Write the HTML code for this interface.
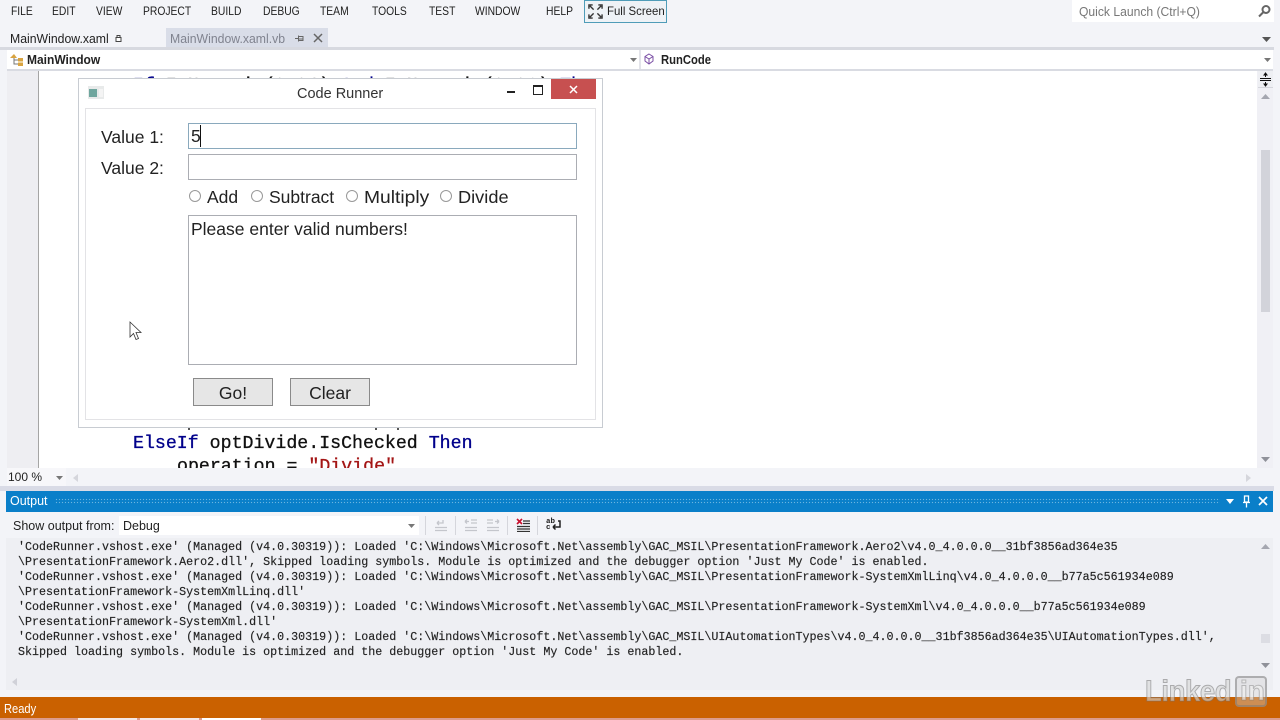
<!DOCTYPE html>
<html><head><meta charset="utf-8"><style>
html,body{margin:0;padding:0}
body{width:1280px;height:720px;overflow:hidden;position:relative;background:#f3f4f8;font-family:"Liberation Sans",sans-serif;color:#1e1e1e}
.a{position:absolute;white-space:pre;transform-origin:0 50%}
.b{position:absolute}
.m{font-size:12px;line-height:16px;top:3px;color:#1e1e1e;transform:scaleX(.86)}
.o{position:absolute;left:18px;font-family:"Liberation Mono",monospace;font-size:11.68px;line-height:15px;color:#222;white-space:pre;-webkit-text-stroke:.15px #222}
.c{position:absolute;font-family:"Liberation Mono",monospace;font-size:18.25px;line-height:22px;white-space:pre;-webkit-text-stroke:.3px currentColor;color:#111}
.l{position:absolute;font-size:17.5px;line-height:22px;color:#222;white-space:pre;transform-origin:0 50%}
.r{position:absolute;width:10px;height:10px;border:1px solid #999;border-radius:50%;background:#fff;top:190px}
.btn{position:absolute;top:378px;width:78px;height:26px;background:#e6e6e6;border:1px solid #8a8a8a;text-align:center;font-size:17.5px;line-height:28px;color:#222}
</style></head><body>
<div class="a m" style="left:11px">FILE</div>
<div class="a m" style="left:52px">EDIT</div>
<div class="a m" style="left:96px">VIEW</div>
<div class="a m" style="left:143px">PROJECT</div>
<div class="a m" style="left:211px">BUILD</div>
<div class="a m" style="left:263px">DEBUG</div>
<div class="a m" style="left:320px">TEAM</div>
<div class="a m" style="left:372px">TOOLS</div>
<div class="a m" style="left:429px">TEST</div>
<div class="a m" style="left:475px">WINDOW</div>
<div class="a m" style="left:546px">HELP</div>
<div class="b" style="left:584px;top:0;width:81px;height:21px;background:#eef2f6;border:1px solid #4f9cb8"></div>
<svg class="b" style="left:588px;top:4px" width="15" height="15" viewBox="0 0 16 16" fill="none" stroke="#333" stroke-width="1.5"><path d="M1 5V1H5M11 1H15V5M15 11V15H11M5 15H1V11M2 2L6 6M14 2L10 6M14 14L10 10M2 14L6 10"/></svg>
<div class="a" style="left:607px;top:3px;font-size:12px;line-height:16px;transform:scaleX(.95)">Full Screen</div>
<div class="b" style="left:1072px;top:0;width:202px;height:22px;background:#fff"></div>
<div class="a" style="left:1079px;top:4px;font-size:12.5px;line-height:16px;color:#777;transform:scaleX(.97)">Quick Launch (Ctrl+Q)</div>
<svg class="b" style="left:1257px;top:4px" width="15" height="14" viewBox="0 0 15 14" fill="none" stroke="#666" stroke-width="2"><circle cx="9" cy="5.5" r="3.5"/><path d="M6.5 8L2 12.5"/></svg>

<div class="a" style="left:10px;top:31px;font-size:12.5px;line-height:16px;color:#222;transform:scaleX(.98)">MainWindow.xaml</div>
<svg class="b" style="left:115px;top:34px" width="7" height="8" viewBox="0 0 7 8" fill="none" stroke="#444"><rect x="1" y="3.5" width="5" height="4" fill="#fff"/><path d="M2 3.5V1.5H5V3.5"/></svg>
<div class="b" style="left:166px;top:28px;width:162px;height:19px;background:#d9dde8"></div>
<div class="a" style="left:170px;top:31px;font-size:12.5px;line-height:16px;color:#80838f;transform:scaleX(.98)">MainWindow.xaml.vb</div>
<svg class="b" style="left:295px;top:34px" width="9" height="9" viewBox="0 0 9 9" fill="none" stroke="#666"><path d="M0 4.5H3M3.5 1.5V7.5M3.5 2.5H8V6.5H3.5M3.5 5H8"/></svg>
<svg class="b" style="left:313px;top:33px" width="10" height="10" viewBox="0 0 10 10" fill="none" stroke="#666" stroke-width="1.5"><path d="M1 1L9 9M9 1L1 9"/></svg>
<svg class="b" style="left:1262px;top:37px" width="9" height="5"><path d="M0 0H9L4.5 5Z" fill="#555"/></svg>
<div class="b" style="left:0;top:47px;width:1274px;height:3px;background:#d7d9e0"></div>

<div class="b" style="left:7px;top:50px;width:1266px;height:19px;background:#fff"></div>
<div class="b" style="left:7px;top:69px;width:1266px;height:2px;background:#d9dbe2"></div>
<div class="b" style="left:639px;top:50px;width:2px;height:19px;background:#e3e4ea"></div>
<svg class="b" style="left:9px;top:52px" width="16" height="15" viewBox="0 0 16 15"><path d="M1 6L5 2L8 6Z" fill="#d9a441"/><path d="M5 6V12H9M5 8H9" stroke="#777" fill="none"/><rect x="9" y="6" width="5" height="3.5" fill="#d9a441"/><rect x="9" y="10.5" width="5" height="3.5" fill="#d9a441"/></svg>
<div class="a" style="left:27px;top:52px;font-size:12.5px;line-height:16px;font-weight:bold;color:#222;transform:scaleX(.96)">MainWindow</div>
<svg class="b" style="left:630px;top:58px" width="7" height="4"><path d="M0 0H7L3.5 4Z" fill="#777"/></svg>
<svg class="b" style="left:644px;top:53px" width="10" height="12" viewBox="0 0 10 12" fill="none" stroke="#7b4fa5"><path d="M5 1L9 3.5V8L5 11L1 8V3.5ZM1 3.5L5 6L9 3.5M5 6V11"/></svg>
<div class="a" style="left:661px;top:52px;font-size:12.5px;line-height:16px;font-weight:bold;color:#222;transform:scaleX(.9)">RunCode</div>
<svg class="b" style="left:1264px;top:58px" width="7" height="4"><path d="M0 0H7L3.5 4Z" fill="#777"/></svg>

<div class="b" style="left:7px;top:71px;width:1250px;height:397px;background:#fff"></div>
<div class="b" style="left:7px;top:71px;width:31px;height:397px;background:#eeeef2"></div>
<div class="b" style="left:38px;top:71px;width:1px;height:397px;background:#a5a5a5"></div>
<div class="c" style="left:133px;top:75px"><span style="color:#00008b">If</span> IsNumeric(txt1) <span style="color:#00008b">And</span> IsNumeric(txt2) <span style="color:#00008b">Then</span></div>
<div class="c" style="left:133px;top:433px"><span style="color:#00008b">ElseIf</span> optDivide.IsChecked <span style="color:#00008b">Then</span></div>
<div class="c" style="left:177px;top:456px;height:12px;overflow:hidden">operation = <span style="color:#a31515">"Divide"</span></div>
<div class="b" style="left:188px;top:428px;width:2px;height:2px;background:#555"></div>
<div class="b" style="left:375px;top:428px;width:2px;height:2px;background:#555"></div>
<div class="b" style="left:397px;top:428px;width:2px;height:2px;background:#555"></div>

<div class="b" style="left:1257px;top:71px;width:16px;height:397px;background:#f0f0f5"></div>
<div class="b" style="left:1258px;top:71px;width:15px;height:16px;background:#eeeff3;border-bottom:1px solid #d5d6dc"></div>
<svg class="b" style="left:1259px;top:72px" width="13" height="15" viewBox="0 0 13 15" fill="none" stroke="#111"><path d="M1 6.5H12M1 8.5H12"/><path d="M6.5 1V5M6.5 10V14" /><path d="M5 3L6.5 1L8 3ZM5 12L6.5 14L8 12Z" fill="#111"/></svg>
<svg class="b" style="left:1261px;top:94px" width="9" height="5"><path d="M0 5H9L4.5 0Z" fill="#a5a7b0"/></svg>
<div class="b" style="left:1261px;top:150px;width:9px;height:162px;background:#d2d3da"></div>
<svg class="b" style="left:1261px;top:457px" width="9" height="5"><path d="M0 0H9L4.5 5Z" fill="#8f9199"/></svg>

<div class="b" style="left:7px;top:468px;width:59px;height:18px;background:#f7f7fa"></div>
<div class="a" style="left:8px;top:470px;font-size:12px;line-height:15px;color:#222">100 %</div>
<svg class="b" style="left:56px;top:476px" width="7" height="4"><path d="M0 0H7L3.5 4Z" fill="#777"/></svg>
<svg class="b" style="left:73px;top:474px" width="5" height="8"><path d="M5 0V8L0 4Z" fill="#d5d6dc"/></svg>
<svg class="b" style="left:1246px;top:474px" width="5" height="8"><path d="M0 0V8L5 4Z" fill="#d5d6dc"/></svg>

<div class="b" style="left:0;top:486px;width:1274px;height:5px;background:#d9dbe6"></div>
<div class="b" style="left:6px;top:491px;width:1267px;height:21px;background:#0a7fc9"></div>
<div class="a" style="left:10px;top:493px;font-size:12.5px;line-height:16px;color:#fff">Output</div>
<div class="b" style="left:55px;top:498px;width:1165px;height:6px;background-image:radial-gradient(#6cb4e0 .7px,transparent .8px);background-size:3px 3px"></div>
<svg class="b" style="left:1226px;top:499px" width="8" height="5"><path d="M0 0H8L4 5Z" fill="#fff"/></svg>
<svg class="b" style="left:1242px;top:495px" width="9" height="13" viewBox="0 0 9 13" fill="none" stroke="#fff" stroke-width="1.3"><path d="M2.5 1H6.5V7H2.5ZM1 7.5H8M4.5 8V12.5"/></svg>
<svg class="b" style="left:1258px;top:496px" width="10" height="10" viewBox="0 0 10 10" fill="none" stroke="#fff" stroke-width="1.7"><path d="M1 1L9 9M9 1L1 9"/></svg>

<div class="a" style="left:13px;top:518px;font-size:12.5px;line-height:16px;color:#222">Show output from:</div>
<div class="b" style="left:119px;top:516px;width:300px;height:19px;background:#fff"></div>
<div class="a" style="left:123px;top:518px;font-size:12.5px;line-height:16px;color:#222">Debug</div>
<svg class="b" style="left:408px;top:524px" width="7" height="4"><path d="M0 0H7L3.5 4Z" fill="#777"/></svg>
<div class="b" style="left:425px;top:516px;width:1px;height:19px;background:#d5d6dc"></div>
<svg class="b" style="left:434px;top:518px" width="14" height="14" viewBox="0 0 14 14" fill="none" stroke="#c4c6cc" stroke-width="1.3"><path d="M1 12.5H13M1 9.5H13M3 5H9V2M3 5L5 3M3 5L5 7"/></svg>
<div class="b" style="left:455px;top:516px;width:1px;height:19px;background:#d5d6dc"></div>
<svg class="b" style="left:464px;top:518px" width="14" height="14" viewBox="0 0 14 14" fill="none" stroke="#c4c6cc" stroke-width="1.3"><path d="M1 12.5H13M1 9.5H13M7 2H13M7 5H13M1 3.5H5M1 3.5L3 1.5M1 3.5L3 5.5"/></svg>
<svg class="b" style="left:486px;top:518px" width="14" height="14" viewBox="0 0 14 14" fill="none" stroke="#c4c6cc" stroke-width="1.3"><path d="M1 12.5H13M1 9.5H13M1 2H7M1 5H7M9 3.5H13M13 3.5L11 1.5M13 3.5L11 5.5"/></svg>
<div class="b" style="left:507px;top:516px;width:1px;height:19px;background:#d5d6dc"></div>
<svg class="b" style="left:516px;top:518px" width="15" height="14" viewBox="0 0 15 14" fill="none"><path d="M1 8.5H14M1 11H14M1 13.5H14M7 3H14M7 5.5H14" stroke="#333" stroke-width="1.2"/><path d="M1 1L6 6M6 1L1 6" stroke="#c8102e" stroke-width="1.6"/></svg>
<div class="b" style="left:537px;top:516px;width:1px;height:19px;background:#d5d6dc"></div>
<div class="a" style="left:546px;top:519px;font-family:'Liberation Mono',monospace;font-size:7.5px;line-height:6px;color:#222;font-weight:bold">ab
c</div>
<svg class="b" style="left:551px;top:520px" width="10" height="11" viewBox="0 0 10 11" fill="none" stroke="#222" stroke-width="1.5"><path d="M7 1H9V7H2M2 7L4.5 4.5M2 7L4.5 9.5"/></svg>

<div class="b" style="left:6px;top:538px;width:1267px;height:152px;background:#eeeff3"></div>
<div class="o" style="top:540px">'CodeRunner.vshost.exe' (Managed (v4.0.30319)): Loaded 'C:\Windows\Microsoft.Net\assembly\GAC_MSIL\PresentationFramework.Aero2\v4.0_4.0.0.0__31bf3856ad364e35</div>
<div class="o" style="top:555px">\PresentationFramework.Aero2.dll', Skipped loading symbols. Module is optimized and the debugger option 'Just My Code' is enabled.</div>
<div class="o" style="top:570px">'CodeRunner.vshost.exe' (Managed (v4.0.30319)): Loaded 'C:\Windows\Microsoft.Net\assembly\GAC_MSIL\PresentationFramework-SystemXmlLinq\v4.0_4.0.0.0__b77a5c561934e089</div>
<div class="o" style="top:585px">\PresentationFramework-SystemXmlLinq.dll'</div>
<div class="o" style="top:600px">'CodeRunner.vshost.exe' (Managed (v4.0.30319)): Loaded 'C:\Windows\Microsoft.Net\assembly\GAC_MSIL\PresentationFramework-SystemXml\v4.0_4.0.0.0__b77a5c561934e089</div>
<div class="o" style="top:615px">\PresentationFramework-SystemXml.dll'</div>
<div class="o" style="top:630px">'CodeRunner.vshost.exe' (Managed (v4.0.30319)): Loaded 'C:\Windows\Microsoft.Net\assembly\GAC_MSIL\UIAutomationTypes\v4.0_4.0.0.0__31bf3856ad364e35\UIAutomationTypes.dll',</div>
<div class="o" style="top:645px">Skipped loading symbols. Module is optimized and the debugger option 'Just My Code' is enabled.</div>
<svg class="b" style="left:1261px;top:544px" width="9" height="5"><path d="M0 5H9L4.5 0Z" fill="#a5a7b0"/></svg>
<div class="b" style="left:1261px;top:634px;width:9px;height:9px;background:#dcdde3"></div>
<svg class="b" style="left:1261px;top:663px" width="9" height="5"><path d="M0 0H9L4.5 5Z" fill="#8f9199"/></svg>
<svg class="b" style="left:12px;top:678px" width="5" height="8"><path d="M5 0V8L0 4Z" fill="#d0d1d8"/></svg>

<div class="b" style="left:0;top:697px;width:1280px;height:21px;background:#ca6100"></div>
<div class="a" style="left:4px;top:701px;font-size:12.5px;line-height:16px;color:#fff;transform:scaleX(.89)">Ready</div>
<div class="b" style="left:0;top:718px;width:1280px;height:2px;background:#dc9c8c"></div>
<div class="b" style="left:78px;top:718px;width:59px;height:2px;background:#f4e8e6"></div>
<div class="b" style="left:140px;top:718px;width:59px;height:2px;background:#f4e8e6"></div>
<div class="b" style="left:202px;top:718px;width:59px;height:2px;background:#fff"></div>

<div class="a" style="left:1145px;top:674px;font-size:30px;line-height:36px;font-weight:bold;color:rgba(215,215,215,.6);-webkit-text-stroke:1px rgba(110,110,110,.5);letter-spacing:-.5px;transform:scaleX(.92)">Linked</div>
<div class="b" style="left:1235px;top:676px;width:32px;height:31px;border:2px solid rgba(120,120,120,.5);border-radius:4px;background:rgba(210,210,210,.4);box-sizing:border-box"></div>
<div class="a" style="left:1240px;top:674px;font-size:28px;line-height:34px;font-weight:bold;color:rgba(240,240,240,.65);-webkit-text-stroke:1px rgba(110,110,110,.4)">in</div>

<div class="b" style="left:78px;top:78px;width:523px;height:348px;background:#fff;border:1px solid #c8ccd2"></div>
<div class="b" style="left:85px;top:108px;width:509px;height:310px;border:1px solid #e3e3e6;background:#fff"></div>
<svg class="b" style="left:88px;top:86px" width="16" height="13" viewBox="0 0 16 13"><rect width="16" height="13" fill="#e8eaea"/><rect x="1" y="3" width="8" height="8" fill="#6fa69e"/><rect x="11" y="3" width="4" height="8" fill="#f4f4f4"/></svg>
<div class="a" style="left:297px;top:85px;font-size:14.5px;line-height:18px;color:#333">Code Runner</div>
<div class="b" style="left:507px;top:91px;width:8px;height:2px;background:#222"></div>
<div class="b" style="left:533px;top:85px;width:8px;height:7px;border:1px solid #222;border-top-width:2px"></div>
<div class="b" style="left:551px;top:79px;width:45px;height:20px;background:#c75050"></div>
<svg class="b" style="left:569px;top:85px" width="9" height="9" viewBox="0 0 9 9" fill="none" stroke="#fff" stroke-width="1.5"><path d="M1 1L8 8M8 1L1 8"/></svg>

<div class="l" style="left:101px;top:126px">Value 1:</div>
<div class="l" style="left:101px;top:157px">Value 2:</div>
<div class="b" style="left:188px;top:123px;width:387px;height:24px;border:1px solid #8aa9bd;background:#fff"></div>
<div class="l" style="left:191px;top:125px">5</div>
<div class="b" style="left:200px;top:125px;width:1px;height:22px;background:#111"></div>
<div class="b" style="left:188px;top:154px;width:387px;height:24px;border:1px solid #abadb3;background:#fff"></div>
<div class="r" style="left:189px"></div><div class="l" style="left:207px;top:186px">Add</div>
<div class="r" style="left:251px"></div><div class="l" style="left:269px;top:186px">Subtract</div>
<div class="r" style="left:346px"></div><div class="l" style="left:364px;top:186px;transform:scaleX(1.1)">Multiply</div>
<div class="r" style="left:440px"></div><div class="l" style="left:458px;top:186px;transform:scaleX(1.04)">Divide</div>
<div class="b" style="left:188px;top:215px;width:387px;height:148px;border:1px solid #abadb3;background:#fff"></div>
<div class="l" style="left:191px;top:218px;font-size:17.5px;transform:scaleX(1.0)">Please enter valid numbers!</div>
<div class="btn" style="left:193px">Go!</div>
<div class="btn" style="left:290px">Clear</div>

<svg class="b" style="left:129px;top:321px" width="13" height="20" viewBox="0 0 13 20"><path d="M1 1V16L4.5 12.5L7 18.5L9.5 17.5L7 11.5H12Z" fill="#fff" stroke="#333" stroke-width=".8"/></svg>
</body></html>
